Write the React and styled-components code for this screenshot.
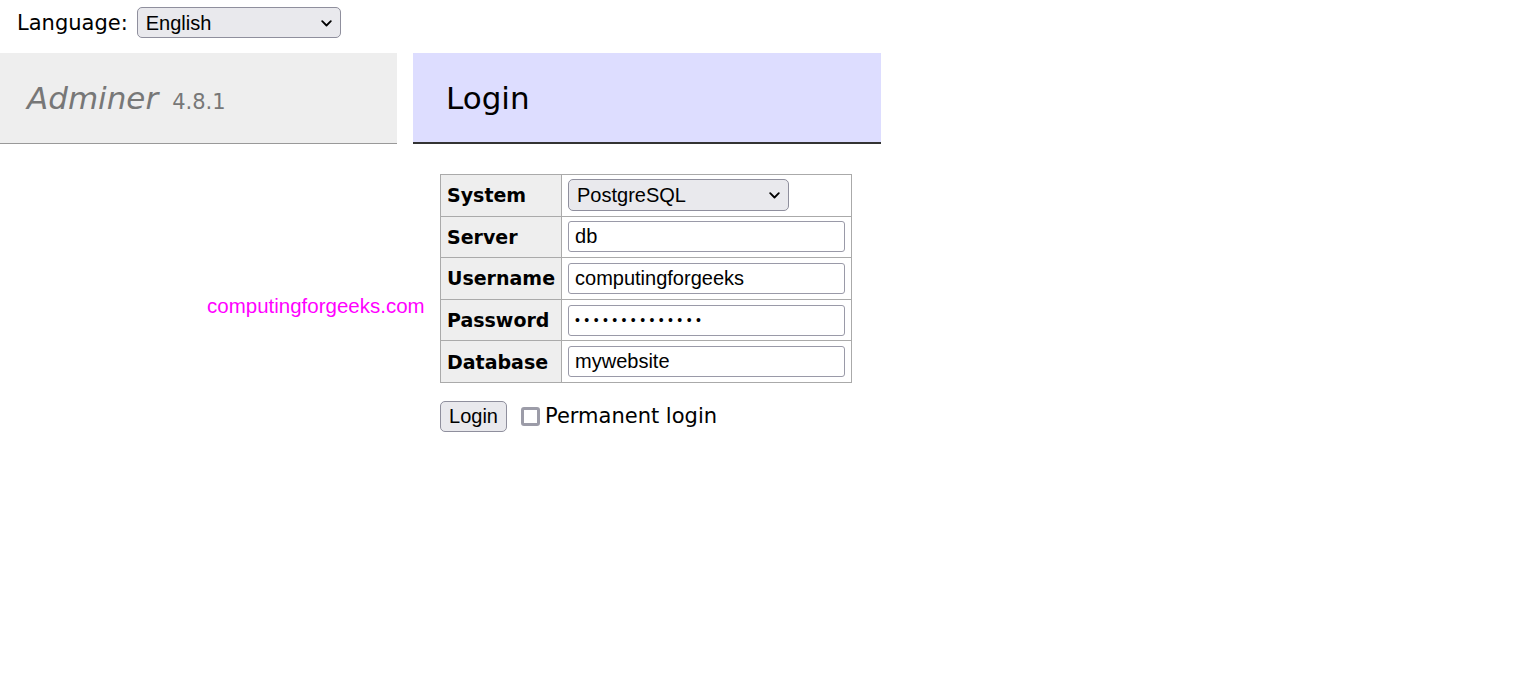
import React from 'react'
import styled, { createGlobalStyle } from 'styled-components'

const GlobalStyle = createGlobalStyle`
  body {
    margin: 0;
    background: #fff;
    color: #000;
    font-family: "DejaVu Sans", Verdana, sans-serif;
  }
`

const Page = styled.div`
  position: relative;
  width: 1536px;
  min-height: 699px;
`

const LangBar = styled.form`
  display: flex;
  align-items: center;
  gap: 9px;
  height: 45px;
  padding: 0 0 0 17px;
  margin: 0 0 8px;
  font-size: 21px;
`

const SelectWrap = styled.span`
  position: relative;
  display: inline-flex;
  width: ${p => p.width}px;
`

const Select = styled.select`
  appearance: none;
  width: 100%;
  height: ${p => p.height || 31}px;
  padding: 0 28px 0 8px;
  border: 1px solid #8f8f9d;
  border-radius: 5px;
  background: #e9e9ed;
  color: #000;
  font: 20px "Liberation Sans", Arial, sans-serif;
  outline: none;
`

const Chevron = styled.svg`
  position: absolute;
  right: 9px;
  top: 50%;
  width: 11px;
  height: 7px;
  margin-top: -3px;
  pointer-events: none;
`

const Main = styled.div`
  display: flex;
  align-items: flex-start;
  gap: 16px;
`

const Menu = styled.div`
  width: 397px;
`

const Heading = styled.h1`
  display: flex;
  align-items: center;
  box-sizing: border-box;
  height: ${p => p.height}px;
  margin: 0;
  padding: 0 0 0 ${p => p.indent}px;
  background: ${p => p.bg};
  border-bottom: ${p => p.border};
  font-weight: normal;
  font-size: 31px;
  color: ${p => p.color};
`

const Title = styled.span`
  display: inline-block;
  line-height: 1;
`

const Brand = styled.span`
  font-style: italic;
  color: #777;
`

const Version = styled.span`
  margin-left: 14px;
  font-size: 21px;
  color: #777;
`

const Content = styled.div`
  width: 468px;
`

const Form = styled.div`
  padding: 30px 0 0 27px;
`

const Table = styled.table`
  border-collapse: collapse;
  border: 1px solid #aaa;
`

const Row = styled.tr`
  height: 41.6px;
`

const Label = styled.th`
  box-sizing: border-box;
  width: 121px;
  padding: 0 6px;
  background: #eee;
  border: 1px solid #aaa;
  text-align: left;
  font-size: 19px;
  font-weight: bold;
  white-space: nowrap;
`

const Cell = styled.td`
  padding: 0 6px;
  border: 1px solid #aaa;
  vertical-align: middle;
`

const Input = styled.input`
  box-sizing: border-box;
  display: block;
  width: 277px;
  height: 31px;
  padding: 0 6px;
  border: 1px solid #9a9aa8;
  border-radius: 3px;
  background: #fff;
  color: #000;
  font: ${p => p.masked ? '14px' : '20px'} "Liberation Sans", Arial, sans-serif;
  letter-spacing: ${p => p.masked ? '4.4px' : 'normal'};
  outline: none;
`

const Actions = styled.div`
  display: flex;
  align-items: center;
  margin-top: 18px;
`

const Button = styled.button`
  box-sizing: border-box;
  width: 67px;
  height: 31px;
  padding: 0;
  border: 1px solid #8f8f9d;
  border-radius: 5px;
  background: #e9e9ed;
  color: #000;
  font: 20px "Liberation Sans", Arial, sans-serif;
`

const CheckLabel = styled.label`
  display: flex;
  align-items: center;
  margin-left: 14px;
  font-size: 21px;
`

const Check = styled.input`
  appearance: none;
  box-sizing: border-box;
  flex: none;
  width: 19px;
  height: 19px;
  margin: 1px 5px 0 0;
  border: 3px solid #9c9ca8;
  border-radius: 3px;
  background: #fff;
`

const Watermark = styled.div`
  position: absolute;
  left: 207px;
  top: 294px;
  font: 20.5px "Liberation Sans", Arial, sans-serif;
  color: #f0f;
`

function Dropdown ({ width, height, value, options }) {
  return (
    <SelectWrap width={width}>
      <Select height={height} defaultValue={value}>
        {options.map(o => <option key={o}>{o}</option>)}
      </Select>
      <Chevron viewBox='0 0 11 7'>
        <path d='M1.2 1.2 L5.5 5.5 L9.8 1.2' fill='none' stroke='#000' strokeWidth='1.8' strokeLinecap='round' strokeLinejoin='round' />
      </Chevron>
    </SelectWrap>
  )
}

const fields = [
  { label: 'Server', value: 'db' },
  { label: 'Username', value: 'computingforgeeks' },
  { label: 'Password', value: 'computingforge', type: 'password' },
  { label: 'Database', value: 'mywebsite' }
]

export default function App () {
  return (
    <Page>
      <GlobalStyle />
      <LangBar>
        <span>Language:</span>
        <Dropdown width={204} height={31} value='English' options={['English', 'Deutsch', 'Français']} />
      </LangBar>
      <Main>
        <Menu>
          <Heading height={91} indent={27} bg='#eee' border='1px solid #999'>
            <Title>
              <Brand>Adminer</Brand>
              <Version>4.8.1</Version>
            </Title>
          </Heading>
        </Menu>
        <Content>
          <Heading height={91} indent={33} bg='#ddf' border='2px solid #333' color='#000'>
            Login
          </Heading>
          <Form>
            <Table>
              <tbody>
                <Row>
                  <Label>System</Label>
                  <Cell>
                    <Dropdown width={221} height={32} value='PostgreSQL' options={['MySQL', 'SQLite 3', 'PostgreSQL', 'Oracle (beta)', 'MS SQL (beta)']} />
                  </Cell>
                </Row>
                {fields.map(f => (
                  <Row key={f.label}>
                    <Label>{f.label}</Label>
                    <Cell>
                      <Input
                        type={f.type || 'text'}
                        masked={f.type === 'password'}
                        defaultValue={f.value} />
                    </Cell>
                  </Row>
                ))}
              </tbody>
            </Table>
            <Actions>
              <Button>Login</Button>
              <CheckLabel>
                <Check type='checkbox' />
                Permanent login
              </CheckLabel>
            </Actions>
          </Form>
        </Content>
      </Main>
      <Watermark>computingforgeeks.com</Watermark>
    </Page>
  )
}
